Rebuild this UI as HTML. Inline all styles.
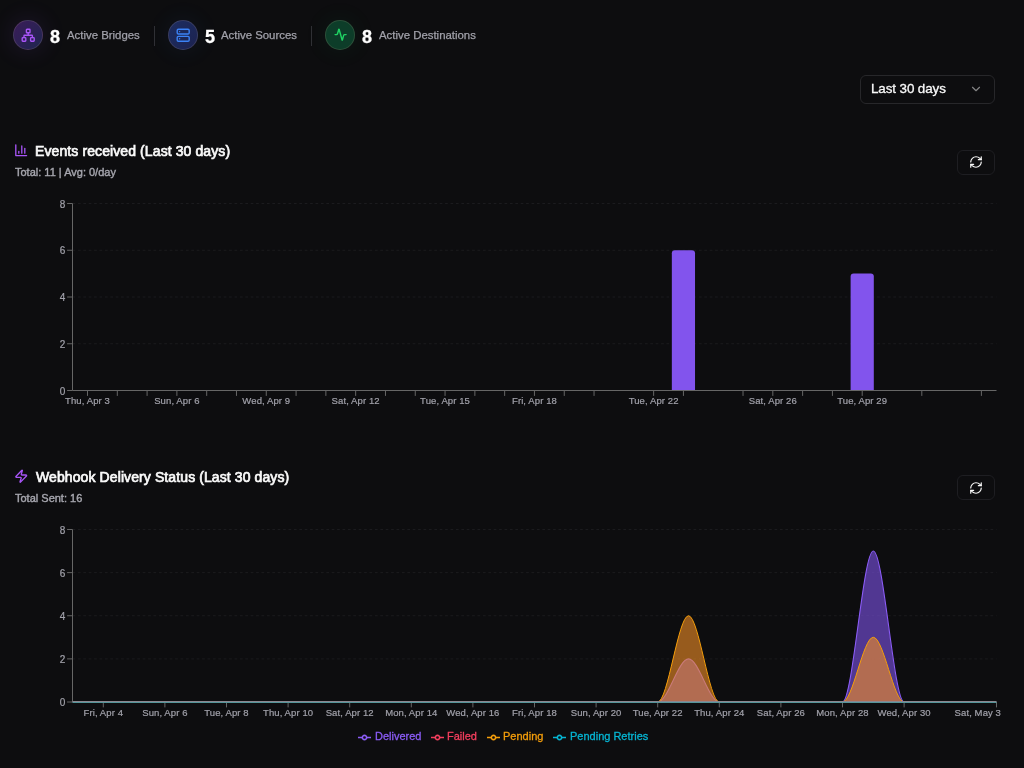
<!DOCTYPE html>
<html><head><meta charset="utf-8"><style>
*{margin:0;padding:0;box-sizing:border-box}
body>div,body>svg{will-change:transform}
html,body{width:1024px;height:768px;overflow:hidden;background:#0d0d0f;font-family:"Liberation Sans", sans-serif;color:#fafafa}
.abs{position:absolute;white-space:nowrap}
.ty{font-size:10px !important}
.tk{font-family:"Liberation Sans", sans-serif;font-size:9.5px;fill:#a1a1aa;stroke:#a1a1aa;stroke-width:0.2px;letter-spacing:0.1px}
.circ{position:absolute;width:30.4px;height:30.4px;border-radius:50%;top:20.2px;border:1px solid rgba(255,215,180,0.13)}
.num{position:absolute;top:25px;font-size:18px;font-weight:bold;color:#fff;-webkit-text-stroke:0.3px #fff;line-height:24px}
.lbl{position:absolute;top:27px;font-size:11.4px;color:#a1a1aa;-webkit-text-stroke:0.25px #a1a1aa;letter-spacing:0px;line-height:16px}
.div{position:absolute;width:1px;height:20px;top:25.5px;background:#303035}
.ttl{position:absolute;font-size:14px;font-weight:normal;color:#fafafa;-webkit-text-stroke:0.7px #fafafa;letter-spacing:0.1px;line-height:18px}
.sub{position:absolute;font-size:11px;color:#a6a6ae;-webkit-text-stroke:0.4px #a6a6ae;line-height:14px}
.btn{position:absolute;left:957px;width:38px;height:25px;border:1px solid #1e1e22;border-radius:6px}
.leg{position:absolute;top:729px;font-size:11px;line-height:14px;-webkit-text-stroke:0.3px currentColor}
</style></head><body>
<div class="circ" style="left:13.3px;background:linear-gradient(135deg,#3a1d58,#1f2550);box-shadow:0 0 22px 4px rgba(139,92,246,0.09)"></div>
<div class="num" style="left:50px">8</div>
<div class="lbl" style="left:66.5px">Active Bridges</div>
<div class="div" style="left:154px"></div>
<div class="circ" style="left:168.2px;background:linear-gradient(135deg,#1d2d60,#1c2250);box-shadow:0 0 22px 4px rgba(59,130,246,0.06)"></div>
<div class="num" style="left:205px">5</div>
<div class="lbl" style="left:221px">Active Sources</div>
<div class="div" style="left:311px"></div>
<div class="circ" style="left:325.1px;background:#0d3d29;box-shadow:0 0 22px 4px rgba(34,197,94,0.05)"></div>
<div class="num" style="left:362px">8</div>
<div class="lbl" style="left:378.5px">Active Destinations</div>

<div class="abs" style="left:860px;top:75px;width:135px;height:28.5px;border:1px solid #27272a;border-radius:6px"></div>
<div class="abs" style="left:871px;top:80px;font-size:13.4px;line-height:17px;letter-spacing:-0.1px;color:#fafafa;-webkit-text-stroke:0.3px #fafafa">Last 30 days</div>

<div class="ttl" style="left:34.8px;top:142px">Events received (Last 30 days)</div>
<div class="sub" style="left:14.5px;top:165px">Total: 11 | Avg: 0/day</div>
<div class="btn" style="top:150px"></div>

<div class="ttl" style="left:36px;top:467.5px">Webhook Delivery Status (Last 30 days)</div>
<div class="sub" style="left:14.5px;top:491px">Total Sent: 16</div>
<div class="btn" style="top:475px"></div>

<svg width="1024" height="230" viewBox="0 180 1024 230" style="position:absolute;left:0;top:180px"><line x1="72.5" y1="203.5" x2="996.5" y2="203.5" stroke="#1b1b1e" stroke-dasharray="2.7 2.7"/><line x1="72.5" y1="250.25" x2="996.5" y2="250.25" stroke="#1b1b1e" stroke-dasharray="2.7 2.7"/><line x1="72.5" y1="297" x2="996.5" y2="297" stroke="#1b1b1e" stroke-dasharray="2.7 2.7"/><line x1="72.5" y1="343.75" x2="996.5" y2="343.75" stroke="#1b1b1e" stroke-dasharray="2.7 2.7"/><path d="M671.83,390.5 V253.25 Q671.83,250.25 674.83,250.25 H692.03 Q695.03,250.25 695.03,253.25 V390.5 Z" fill="#8254ed"/><path d="M850.61,390.5 V276.62 Q850.61,273.62 853.61,273.62 H870.81 Q873.81,273.62 873.81,276.62 V390.5 Z" fill="#8254ed"/><line x1="72.5" y1="203.5" x2="72.5" y2="390.5" stroke="#666"/><line x1="72.5" y1="390.5" x2="996.5" y2="390.5" stroke="#666"/><line x1="67.1" y1="390.5" x2="72.5" y2="390.5" stroke="#666"/><text x="65.3" y="394.6" text-anchor="end" class="tk ty">0</text><line x1="67.1" y1="343.75" x2="72.5" y2="343.75" stroke="#666"/><text x="65.3" y="347.85" text-anchor="end" class="tk ty">2</text><line x1="67.1" y1="297" x2="72.5" y2="297" stroke="#666"/><text x="65.3" y="301.1" text-anchor="end" class="tk ty">4</text><line x1="67.1" y1="250.25" x2="72.5" y2="250.25" stroke="#666"/><text x="65.3" y="254.35" text-anchor="end" class="tk ty">6</text><line x1="67.1" y1="203.5" x2="72.5" y2="203.5" stroke="#666"/><text x="65.3" y="207.6" text-anchor="end" class="tk ty">8</text><line x1="87.5" y1="390.5" x2="87.5" y2="395.9" stroke="#666"/><text x="87.5" y="404" text-anchor="middle" class="tk">Thu, Apr 3</text><line x1="117.3" y1="390.5" x2="117.3" y2="395.9" stroke="#666"/><line x1="147.09" y1="390.5" x2="147.09" y2="395.9" stroke="#666"/><line x1="176.89" y1="390.5" x2="176.89" y2="395.9" stroke="#666"/><text x="176.89" y="404" text-anchor="middle" class="tk">Sun, Apr 6</text><line x1="206.69" y1="390.5" x2="206.69" y2="395.9" stroke="#666"/><line x1="236.48" y1="390.5" x2="236.48" y2="395.9" stroke="#666"/><line x1="266.28" y1="390.5" x2="266.28" y2="395.9" stroke="#666"/><text x="266.28" y="404" text-anchor="middle" class="tk">Wed, Apr 9</text><line x1="296.08" y1="390.5" x2="296.08" y2="395.9" stroke="#666"/><line x1="325.87" y1="390.5" x2="325.87" y2="395.9" stroke="#666"/><line x1="355.67" y1="390.5" x2="355.67" y2="395.9" stroke="#666"/><text x="355.67" y="404" text-anchor="middle" class="tk">Sat, Apr 12</text><line x1="385.47" y1="390.5" x2="385.47" y2="395.9" stroke="#666"/><line x1="415.26" y1="390.5" x2="415.26" y2="395.9" stroke="#666"/><line x1="445.06" y1="390.5" x2="445.06" y2="395.9" stroke="#666"/><text x="445.06" y="404" text-anchor="middle" class="tk">Tue, Apr 15</text><line x1="474.86" y1="390.5" x2="474.86" y2="395.9" stroke="#666"/><line x1="504.65" y1="390.5" x2="504.65" y2="395.9" stroke="#666"/><line x1="534.45" y1="390.5" x2="534.45" y2="395.9" stroke="#666"/><text x="534.45" y="404" text-anchor="middle" class="tk">Fri, Apr 18</text><line x1="564.25" y1="390.5" x2="564.25" y2="395.9" stroke="#666"/><line x1="594.04" y1="390.5" x2="594.04" y2="395.9" stroke="#666"/><line x1="653.64" y1="390.5" x2="653.64" y2="395.9" stroke="#666"/><text x="653.64" y="404" text-anchor="middle" class="tk">Tue, Apr 22</text><line x1="683.43" y1="390.5" x2="683.43" y2="395.9" stroke="#666"/><line x1="743.03" y1="390.5" x2="743.03" y2="395.9" stroke="#666"/><line x1="772.82" y1="390.5" x2="772.82" y2="395.9" stroke="#666"/><text x="772.82" y="404" text-anchor="middle" class="tk">Sat, Apr 26</text><line x1="802.62" y1="390.5" x2="802.62" y2="395.9" stroke="#666"/><line x1="832.42" y1="390.5" x2="832.42" y2="395.9" stroke="#666"/><line x1="862.21" y1="390.5" x2="862.21" y2="395.9" stroke="#666"/><text x="862.21" y="404" text-anchor="middle" class="tk">Tue, Apr 29</text><line x1="921.81" y1="390.5" x2="921.81" y2="395.9" stroke="#666"/><line x1="981.4" y1="390.5" x2="981.4" y2="395.9" stroke="#666"/></svg>
<svg width="1024" height="230" viewBox="0 510 1024 230" style="position:absolute;left:0;top:510px"><line x1="72.5" y1="529.5" x2="996.5" y2="529.5" stroke="#1b1b1e" stroke-dasharray="2.7 2.7"/><line x1="72.5" y1="572.62" x2="996.5" y2="572.62" stroke="#1b1b1e" stroke-dasharray="2.7 2.7"/><line x1="72.5" y1="615.75" x2="996.5" y2="615.75" stroke="#1b1b1e" stroke-dasharray="2.7 2.7"/><line x1="72.5" y1="658.88" x2="996.5" y2="658.88" stroke="#1b1b1e" stroke-dasharray="2.7 2.7"/><path d="M657.7,702 C667.97,702 678.23,658.88 688.5,658.88 C698.77,658.88 709.03,702 719.3,702 Z" fill="#7f54ea" fill-opacity="0.6"/><path d="M657.7,702 C667.97,702 678.23,658.88 688.5,658.88 C698.77,658.88 709.03,702 719.3,702" fill="none" stroke="#8b5cf6" stroke-width="1.1"/><path d="M842.5,702 C852.77,702 863.03,551.06 873.3,551.06 C883.57,551.06 893.83,702 904.1,702 Z" fill="#7f54ea" fill-opacity="0.6"/><path d="M842.5,702 C852.77,702 863.03,551.06 873.3,551.06 C883.57,551.06 893.83,702 904.1,702" fill="none" stroke="#8b5cf6" stroke-width="1.1"/><path d="M657.7,702 C667.97,702 678.23,615.75 688.5,615.75 C698.77,615.75 709.03,702 719.3,702 Z" fill="#f49027" fill-opacity="0.6"/><path d="M657.7,702 C667.97,702 678.23,615.75 688.5,615.75 C698.77,615.75 709.03,702 719.3,702" fill="none" stroke="#f59e0b" stroke-width="1"/><path d="M842.5,702 C852.77,702 863.03,637.31 873.3,637.31 C883.57,637.31 893.83,702 904.1,702 Z" fill="#f49027" fill-opacity="0.6"/><path d="M842.5,702 C852.77,702 863.03,637.31 873.3,637.31 C883.57,637.31 893.83,702 904.1,702" fill="none" stroke="#f59e0b" stroke-width="1"/><line x1="72.5" y1="529.5" x2="72.5" y2="702" stroke="#666"/><line x1="72.5" y1="702" x2="996.5" y2="702" stroke="#666"/><line x1="67.1" y1="702" x2="72.5" y2="702" stroke="#666"/><text x="65.3" y="706.1" text-anchor="end" class="tk ty">0</text><line x1="67.1" y1="658.88" x2="72.5" y2="658.88" stroke="#666"/><text x="65.3" y="662.98" text-anchor="end" class="tk ty">2</text><line x1="67.1" y1="615.75" x2="72.5" y2="615.75" stroke="#666"/><text x="65.3" y="619.85" text-anchor="end" class="tk ty">4</text><line x1="67.1" y1="572.62" x2="72.5" y2="572.62" stroke="#666"/><text x="65.3" y="576.73" text-anchor="end" class="tk ty">6</text><line x1="67.1" y1="529.5" x2="72.5" y2="529.5" stroke="#666"/><text x="65.3" y="533.6" text-anchor="end" class="tk ty">8</text><line x1="103.3" y1="702" x2="103.3" y2="707.4" stroke="#666"/><text x="103.3" y="716" text-anchor="middle" class="tk">Fri, Apr 4</text><line x1="164.9" y1="702" x2="164.9" y2="707.4" stroke="#666"/><text x="164.9" y="716" text-anchor="middle" class="tk">Sun, Apr 6</text><line x1="226.5" y1="702" x2="226.5" y2="707.4" stroke="#666"/><text x="226.5" y="716" text-anchor="middle" class="tk">Tue, Apr 8</text><line x1="288.1" y1="702" x2="288.1" y2="707.4" stroke="#666"/><text x="288.1" y="716" text-anchor="middle" class="tk">Thu, Apr 10</text><line x1="349.7" y1="702" x2="349.7" y2="707.4" stroke="#666"/><text x="349.7" y="716" text-anchor="middle" class="tk">Sat, Apr 12</text><line x1="411.3" y1="702" x2="411.3" y2="707.4" stroke="#666"/><text x="411.3" y="716" text-anchor="middle" class="tk">Mon, Apr 14</text><line x1="472.9" y1="702" x2="472.9" y2="707.4" stroke="#666"/><text x="472.9" y="716" text-anchor="middle" class="tk">Wed, Apr 16</text><line x1="534.5" y1="702" x2="534.5" y2="707.4" stroke="#666"/><text x="534.5" y="716" text-anchor="middle" class="tk">Fri, Apr 18</text><line x1="596.1" y1="702" x2="596.1" y2="707.4" stroke="#666"/><text x="596.1" y="716" text-anchor="middle" class="tk">Sun, Apr 20</text><line x1="657.7" y1="702" x2="657.7" y2="707.4" stroke="#666"/><text x="657.7" y="716" text-anchor="middle" class="tk">Tue, Apr 22</text><line x1="719.3" y1="702" x2="719.3" y2="707.4" stroke="#666"/><text x="719.3" y="716" text-anchor="middle" class="tk">Thu, Apr 24</text><line x1="780.9" y1="702" x2="780.9" y2="707.4" stroke="#666"/><text x="780.9" y="716" text-anchor="middle" class="tk">Sat, Apr 26</text><line x1="842.5" y1="702" x2="842.5" y2="707.4" stroke="#666"/><text x="842.5" y="716" text-anchor="middle" class="tk">Mon, Apr 28</text><line x1="904.1" y1="702" x2="904.1" y2="707.4" stroke="#666"/><text x="904.1" y="716" text-anchor="middle" class="tk">Wed, Apr 30</text><line x1="996.5" y1="702" x2="996.5" y2="707.4" stroke="#666"/><text x="1001" y="716" text-anchor="end" class="tk">Sat, May 3</text><rect x="72.5" y="701" width="924.0" height="1" fill="#8c8790"/><rect x="72.5" y="702" width="924.0" height="1" fill="#55959a"/></svg>

<div class="leg" style="left:375px;color:#8b5cf6">Delivered</div>
<div class="leg" style="left:446.8px;color:#f43f5e">Failed</div>
<div class="leg" style="left:502.9px;color:#f59e0b">Pending</div>
<div class="leg" style="left:569.5px;color:#06b6d4">Pending Retries</div>

<svg class="abs" style="left:21.3px;top:28.2px" width="14.4" height="14.4" viewBox="0 0 24 24" fill="none" stroke="#a855f7" stroke-width="2.3" stroke-linecap="round" stroke-linejoin="round"><rect x="16" y="16" width="6" height="6" rx="1"/><rect x="2" y="16" width="6" height="6" rx="1"/><rect x="9" y="2" width="6" height="6" rx="1"/><path d="M5 16v-3a1 1 0 0 1 1-1h12a1 1 0 0 1 1 1v3"/><path d="M12 12V8"/></svg>
<svg class="abs" style="left:176.2px;top:28.2px" width="14.4" height="14.4" viewBox="0 0 24 24" fill="none" stroke="#3b82f6" stroke-width="2.3" stroke-linecap="round" stroke-linejoin="round"><rect width="20" height="8" x="2" y="2" rx="2" ry="2"/><rect width="20" height="8" x="2" y="14" rx="2" ry="2"/><line x1="6" x2="6.01" y1="6" y2="6"/><line x1="6" x2="6.01" y1="18" y2="18"/></svg>
<svg class="abs" style="left:334.3px;top:28.3px" width="13.2" height="13.2" viewBox="0 0 24 24" fill="none" stroke="#1fd263" stroke-width="2.6" stroke-linecap="round" stroke-linejoin="round"><path d="M22 12h-2.48a2 2 0 0 0-1.93 1.46l-2.35 8.36a.25.25 0 0 1-.48 0L9.24 2.18a.25.25 0 0 0-.48 0l-2.35 8.36A2 2 0 0 1 4.49 12H2"/></svg>
<svg class="abs" style="left:13.6px;top:142.6px" width="14.4" height="14.4" viewBox="0 0 24 24" fill="none" stroke="#a855f7" stroke-width="2.2" stroke-linecap="round" stroke-linejoin="round"><path d="M3 3v18h18"/><path d="M18 17V9"/><path d="M13 17V5"/><path d="M8 17v-3"/></svg>
<svg class="abs" style="left:14.1px;top:468.9px" width="14.4" height="14.4" viewBox="0 0 24 24" fill="none" stroke="#a855f7" stroke-width="2.2" stroke-linecap="round" stroke-linejoin="round"><path d="M4 14a1 1 0 0 1-.78-1.63l9.9-10.2a.5.5 0 0 1 .86.46l-1.92 6.02A1 1 0 0 0 13 10h7a1 1 0 0 1 .78 1.63l-9.9 10.2a.5.5 0 0 1-.86-.46l1.92-6.02A1 1 0 0 0 11 14z"/></svg>
<svg class="abs" style="left:969px;top:155px" width="14" height="14" viewBox="0 0 24 24" fill="none" stroke="#fafafa" stroke-width="2" stroke-linecap="round" stroke-linejoin="round"><path d="M3 12a9 9 0 0 1 9-9 9.75 9.75 0 0 1 6.74 2.74L21 8"/><path d="M21 3v5h-5"/><path d="M21 12a9 9 0 0 1-9 9 9.75 9.75 0 0 1-6.74-2.74L3 16"/><path d="M8 16H3v5"/></svg>
<svg class="abs" style="left:969px;top:481px" width="14" height="14" viewBox="0 0 24 24" fill="none" stroke="#fafafa" stroke-width="2" stroke-linecap="round" stroke-linejoin="round"><path d="M3 12a9 9 0 0 1 9-9 9.75 9.75 0 0 1 6.74 2.74L21 8"/><path d="M21 3v5h-5"/><path d="M21 12a9 9 0 0 1-9 9 9.75 9.75 0 0 1-6.74-2.74L3 16"/><path d="M8 16H3v5"/></svg>
<svg class="abs" style="left:969px;top:82px" width="14" height="14" viewBox="0 0 24 24" fill="none" stroke="#fafafa" stroke-opacity="0.5" stroke-width="2" stroke-linecap="round" stroke-linejoin="round"><path d="m6 9 6 6 6-6"/></svg>
<svg class="abs" style="left:357.9px;top:730.75px" width="13" height="13" viewBox="0 0 32 32"><path stroke-width="4" fill="none" stroke="#8b5cf6" d="M0,16h10.67A5.33,5.33,0,1,1,21.33,16H32M21.33,16A5.33,5.33,0,1,1,10.67,16"/></svg>
<svg class="abs" style="left:431.1px;top:730.75px" width="13" height="13" viewBox="0 0 32 32"><path stroke-width="4" fill="none" stroke="#f43f5e" d="M0,16h10.67A5.33,5.33,0,1,1,21.33,16H32M21.33,16A5.33,5.33,0,1,1,10.67,16"/></svg>
<svg class="abs" style="left:486.8px;top:730.75px" width="13" height="13" viewBox="0 0 32 32"><path stroke-width="4" fill="none" stroke="#f59e0b" d="M0,16h10.67A5.33,5.33,0,1,1,21.33,16H32M21.33,16A5.33,5.33,0,1,1,10.67,16"/></svg>
<svg class="abs" style="left:553.4px;top:730.75px" width="13" height="13" viewBox="0 0 32 32"><path stroke-width="4" fill="none" stroke="#06b6d4" d="M0,16h10.67A5.33,5.33,0,1,1,21.33,16H32M21.33,16A5.33,5.33,0,1,1,10.67,16"/></svg>
</body></html>
